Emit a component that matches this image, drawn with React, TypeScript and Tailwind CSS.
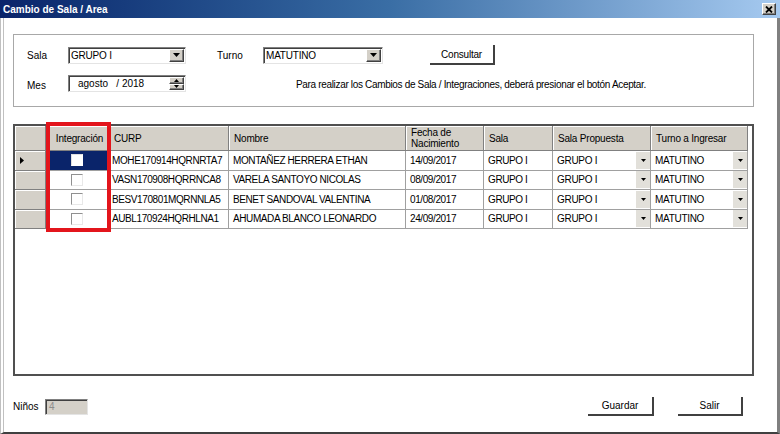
const sunken =
  'border border-t-[#808080] border-l-[#808080] border-b-[#e4e4e4] border-r-[#e4e4e4] shadow-[inset_1px_1px_0_#404040]'
const raised =
  'bg-[#d4d0c8] border border-t-white border-l-white border-r-[#404040] border-b-[#404040] shadow-[inset_-1px_-1px_0_#808080]'
const flatBtn =
  'bg-white border-r-2 border-b-2 border-r-[#404040] border-b-[#404040] flex items-center justify-center'

const rows = [
  { curp: 'MOHE170914HQRNRTA7', nombre: 'MONTAÑEZ HERRERA ETHAN', fecha: '14/09/2017' },
  { curp: 'VASN170908HQRRNCA8', nombre: 'VARELA SANTOYO NICOLAS', fecha: '08/09/2017' },
  { curp: 'BESV170801MQRNNLA5', nombre: 'BENET SANDOVAL VALENTINA', fecha: '01/08/2017' },
  { curp: 'AUBL170924HQRHLNA1', nombre: 'AHUMADA BLANCO LEONARDO', fecha: '24/09/2017' },
]

function DownArrow({ small = false }: { small?: boolean }) {
  return small ? (
    <svg width="5" height="3" viewBox="0 0 5 3">
      <polygon points="0,0 5,0 2.5,3" fill="#000" />
    </svg>
  ) : (
    <svg width="7" height="4" viewBox="0 0 7 4">
      <polygon points="0,0 7,0 3.5,4" fill="#000" />
    </svg>
  )
}

function Combo({ value, width }: { value: string; width: string }) {
  return (
    <div className={`${width} h-[17px] bg-white flex items-center ${sunken}`}>
      <span className="flex-1 pl-[2px] tracking-[-0.2px]">{value}</span>
      <div className={`w-[15px] h-[13px] mr-px flex items-center justify-center ${raised}`}>
        <DownArrow />
      </div>
    </div>
  )
}

function DatePicker() {
  return (
    <div className={`w-[118px] h-[17px] bg-white flex items-center ${sunken}`}>
      <span className="flex-1 pl-[9px] whitespace-pre">agosto   / 2018</span>
      <div className="w-[15px] h-[13px] mr-px flex flex-col">
        <div className={`h-1/2 flex items-center justify-center ${raised}`}>
          <svg width="5" height="3" viewBox="0 0 5 3">
            <polygon points="0,3 5,3 2.5,0" fill="#000" />
          </svg>
        </div>
        <div className={`h-1/2 flex items-center justify-center ${raised}`}>
          <DownArrow small />
        </div>
      </div>
    </div>
  )
}

function CheckBox({ selected }: { selected?: boolean }) {
  return (
    <div
      className={`w-[12px] h-[12px] bg-white border ${
        selected
          ? 'border-t-[#e0e0e0] border-l-[#e0e0e0] border-b-white border-r-white'
          : 'border-t-[#909090] border-l-[#909090] border-b-[#e8e8e8] border-r-[#e8e8e8]'
      }`}
    />
  )
}

function CellCombo({ value, width }: { value: string; width: string }) {
  return (
    <div className={`${width} h-full flex items-center border-r border-b border-[#a0a0a0]`}>
      <span className="flex-1 pl-[4px] tracking-[-0.3px]">{value}</span>
      <div className="w-[14px] h-[17px] bg-[#e2e0da] flex items-center justify-center">
        <DownArrow small />
      </div>
    </div>
  )
}

const headCell =
  'h-full flex items-center bg-[#d4d0c8] border-r border-b border-[#808080] shadow-[inset_1px_1px_0_#fff] pl-[5px] leading-[11px] tracking-[-0.2px]'
const bodyCell = 'h-full flex items-center border-r border-b border-[#a0a0a0] tracking-[-0.4px]'

export default function App() {
  return (
    <div className="w-[780px] h-[434px] bg-white flex flex-col overflow-hidden text-[10px] text-black font-['Liberation_Sans',Arial,sans-serif]">
      {/* title bar */}
      <div className="h-[18px] shrink-0 flex items-center bg-linear-to-r from-[#0a246a] via-[#3a6ea5] to-[#a6caf0] pl-[3px] pr-[4px]">
        <span className="flex-1 text-white font-bold text-[10px]">Cambio de Sala / Area</span>
        <div className={`w-[14px] h-[12px] flex items-center justify-center ${raised}`}>
          <svg width="8" height="7" viewBox="0 0 8 7">
            <path d="M1 0.5 L7 6.5 M7 0.5 L1 6.5" stroke="#000" strokeWidth="1.8" />
          </svg>
        </div>
      </div>

      {/* window body */}
      <div className="flex-1 flex flex-col pl-[9px] pr-[23px] border-l-[4px] [border-left-style:double] border-l-[#c0c0c0] border-r-[3px] border-r-[#808080] border-b-2 border-b-[#404040]">
        {/* filter group */}
        <div className="mt-[16px] w-[741px] h-[73px] border border-[#a8a8a8] pl-[13px] pt-[10px]">
          <div className="flex items-center h-[20px]">
            <span className="w-[41px]">Sala</span>
            <Combo value="GRUPO I" width="w-[118px]" />
            <span className="ml-[31px] w-[46px]">Turno</span>
            <Combo value="MATUTINO" width="w-[120px]" />
            <div className={`ml-[47px] w-[65px] h-[20px] tracking-[-0.2px] ${flatBtn}`}>Consultar</div>
          </div>
          <div className="flex items-center h-[17px] mt-[10px]">
            <span className="w-[41px] pt-[3px]">Mes</span>
            <DatePicker />
            <span className="ml-[110px] pt-[2px] tracking-[-0.33px]">
              Para realizar los Cambios de Sala / Integraciones, deberá presionar el botón Aceptar.
            </span>
          </div>
        </div>

        {/* students grid */}
        <div className="relative mt-[17px] w-[741px] h-[252px] border-2 border-[#505050] bg-white">
          <div className="flex h-[25px]">
            <div className={`w-[31px] ${headCell}`} />
            <div className={`w-[63px] ${headCell} justify-center pl-0`}>Integración</div>
            <div className={`w-[120px] ${headCell}`}>CURP</div>
            <div className={`w-[177px] ${headCell}`}>Nombre</div>
            <div className={`w-[78px] ${headCell}`}>
              Fecha de
              <br />
              Nacimiento
            </div>
            <div className={`w-[69px] ${headCell}`}>Sala</div>
            <div className={`w-[98px] ${headCell}`}>Sala Propuesta</div>
            <div className={`w-[97px] ${headCell}`}>Turno a Ingresar</div>
          </div>
          {rows.map((r, i) => (
            <div key={r.curp} className="flex h-[19.5px]">
              <div className={`w-[31px] ${headCell} pl-[4px]`}>
                {i === 0 && (
                  <svg width="4" height="7" viewBox="0 0 4 7">
                    <polygon points="0,0 4,3.5 0,7" fill="#000" />
                  </svg>
                )}
              </div>
              <div className={`w-[63px] ${bodyCell} justify-center ${i === 0 ? 'bg-[#0a246a]' : ''}`}>
                <CheckBox selected={i === 0} />
              </div>
              <div className={`w-[120px] ${bodyCell} pl-[3px]`}>{r.curp}</div>
              <div className={`w-[177px] ${bodyCell} pl-[4px]`}>{r.nombre}</div>
              <div className={`w-[78px] ${bodyCell} pl-[4px]`}>{r.fecha}</div>
              <div className={`w-[69px] ${bodyCell} pl-[4px]`}>GRUPO I</div>
              <CellCombo value="GRUPO I" width="w-[98px]" />
              <CellCombo value="MATUTINO" width="w-[97px]" />
            </div>
          ))}
          {/* highlight around the Integración column */}
          <div className="absolute left-[31px] -top-[4px] w-[65px] h-[110px] border-4 border-[#e3151c] pointer-events-none" />
        </div>

        {/* footer */}
        <div className="mt-[21px] h-[19px] flex items-center">
          <span className="w-[32px]">Niños</span>
          <div className={`w-[43px] h-[16px] bg-[#d4d0c8] text-[#8c8c8c] pl-[3px] flex items-center ${sunken}`}>4</div>
          <div className="flex-1" />
          <div className={`w-[66px] h-[19px] ${flatBtn}`}>Guardar</div>
          <div className={`ml-[24px] mr-[11px] w-[65px] h-[19px] ${flatBtn}`}>Salir</div>
        </div>
      </div>
    </div>
  )
}
